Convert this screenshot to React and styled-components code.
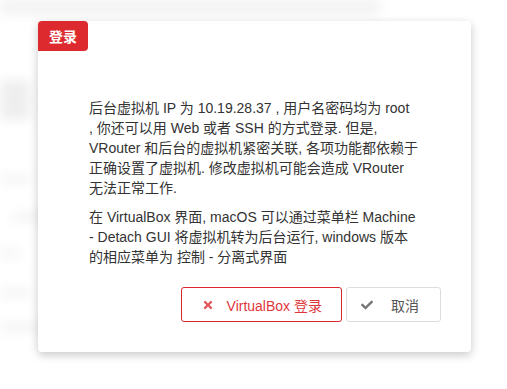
import React from 'react';
import styled, { createGlobalStyle } from 'styled-components';
import { FaTimes, FaCheck } from 'react-icons/fa';

const GlobalStyle = createGlobalStyle`
  html, body {
    margin: 0;
    padding: 0;
    background: #ffffff;
  }
  body {
    font-family: "Liberation Sans", "Noto Sans CJK SC", sans-serif;
  }
`;

const Stage = styled.div`
  position: relative;
  width: 507px;
  height: 389px;
  overflow: hidden;
  background: #ffffff;
`;

const Backdrop = styled.div`
  display: flex;
  flex-direction: column;
  filter: blur(6px);
  opacity: 0.35;
`;

const TopBar = styled.div`
  height: 14px;
  width: 380px;
  background: #d8d8d8;
  margin-bottom: 58px;
`;

const GhostRow = styled.div`
  height: ${p => p.h || 6}px;
  width: ${p => p.w}px;
  margin-top: ${p => p.gap}px;
  margin-left: ${p => p.x || 0}px;
  background: #cfcfcf;
  border-radius: 3px;
`;

const Card = styled.div`
  position: absolute;
  left: 38px;
  top: 21px;
  width: 433px;
  display: flex;
  flex-direction: column;
  background: #ffffff;
  border-radius: 4px;
  box-shadow: 0 3px 10px rgba(0, 0, 0, 0.22);
  padding-bottom: 30px;
`;

const Badge = styled.div`
  align-self: flex-start;
  width: 50px;
  height: 30px;
  display: flex;
  align-items: center;
  justify-content: center;
  background: #dc2a2e;
  color: #ffffff;
  font-size: 14px;
  font-weight: bold;
  border-radius: 4px 4px 4px 0;
`;

const Body = styled.div`
  margin: 47px 0 0 51px;
  width: 340px;
  color: #333333;
  font-size: 14px;
  line-height: 20px;
  white-space: nowrap;
`;

const Para = styled.p`
  margin: 0 0 ${p => p.last ? 0 : 9}px;
`;

const Footer = styled.div`
  display: flex;
  justify-content: flex-end;
  gap: 4px;
  margin-top: 20px;
  padding-right: 30px;
`;

const Button = styled.button`
  display: flex;
  align-items: center;
  gap: ${p => p.danger ? 13 : 18}px;
  height: 35px;
  padding: 0 ${p => p.danger ? 19 : 21}px 0 ${p => p.danger ? 20 : 14}px;
  background: #ffffff;
  border: 1px solid ${p => p.danger ? '#d9272e' : '#dddddd'};
  border-radius: 3px;
  color: ${p => p.danger ? '#e0373c' : '#555555'};
  font-family: "Liberation Sans", "Noto Sans CJK SC", sans-serif;
  font-size: 14px;
  cursor: pointer;

  svg {
    width: 12px;
    height: 12px;
    color: ${p => p.danger ? '#e4555a' : '#777777'};
  }
`;

const App = () => (
  <Stage>
    <GlobalStyle />
    <Backdrop>
      <TopBar />
      <GhostRow w={30} h={40} gap={8} />
      <GhostRow w={30} h={6} gap={56} />
      <GhostRow w={40} h={6} gap={32} x={12} />
      <GhostRow w={20} h={6} gap={30} />
      <GhostRow w={30} h={6} gap={34} />
      <GhostRow w={70} h={6} gap={28} />
    </Backdrop>
    <Card>
      <Badge>登录</Badge>
      <Body>
        <Para>
          后台虚拟机 IP 为 10.19.28.37 , 用户名密码均为 root<br />
          , 你还可以用 Web 或者 SSH 的方式登录. 但是,<br />
          VRouter 和后台的虚拟机紧密关联, 各项功能都依赖于<br />
          正确设置了虚拟机. 修改虚拟机可能会造成 VRouter<br />
          无法正常工作.
        </Para>
        <Para last>
          在 VirtualBox 界面, macOS 可以通过菜单栏 Machine<br />
          - Detach GUI 将虚拟机转为后台运行, windows 版本<br />
          的相应菜单为 控制 - 分离式界面
        </Para>
      </Body>
      <Footer>
        <Button danger>
          <FaTimes />
          VirtualBox 登录
        </Button>
        <Button>
          <FaCheck />
          取消
        </Button>
      </Footer>
    </Card>
  </Stage>
);

export default App;
